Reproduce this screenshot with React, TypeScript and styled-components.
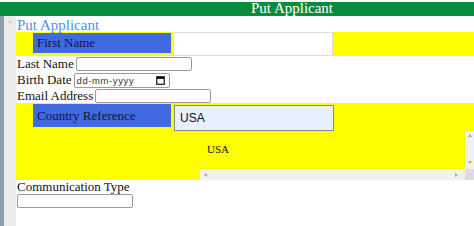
import { createGlobalStyle, styled } from "styled-components";

const GlobalStyle = createGlobalStyle`
  html, body {
    margin: 0;
    padding: 0;
    background: #ffffff;
  }
  body {
    font-family: "Liberation Serif", "Times New Roman", serif;
    color: #111;
  }
`;

const Header = styled.div`
  margin-top: 2px;
  height: 14px;
  line-height: 13px;
  background: #0a8a3c;
  color: #ffffff;
  font-size: 15px;
  text-align: center;
  padding-left: 110px;
`;

const Layout = styled.div`
  display: flex;
  min-height: calc(100vh - 16px);
`;

const Gutter = styled.div`
  width: 12px;
  flex-shrink: 0;
  border-left: 4px solid #8e9baa;
  background: #ececec;
  color: #9a9a9a;
  font-family: "DejaVu Sans", sans-serif;
  font-size: 8px;
  line-height: 8px;
  padding-top: 6px;
  text-align: center;
  box-sizing: content-box;
`;

const Content = styled.div`
  flex: 1;
  min-width: 0;
`;

const SectionTitle = styled.div`
  height: 16px;
  line-height: 18px;
  font-size: 15px;
  color: #4f93e3;
  padding-left: 1px;
`;

const YellowRow = styled.div<{ $height: number }>`
  display: flex;
  align-items: stretch;
  height: ${(p) => p.$height}px;
  background: #ffff00;
  padding-left: 17px;
`;

const BlueLabel = styled.div<{ $top: number; $height: number }>`
  width: 138px;
  height: ${(p) => p.$height}px;
  margin-top: ${(p) => p.$top}px;
  box-sizing: border-box;
  padding-left: 4px;
  background: #4169e1;
  color: #14143c;
  font-size: 13px;
  line-height: ${(p) => p.$height}px;
  flex-shrink: 0;
`;

const WideInput = styled.input<{ $filled?: boolean }>`
  width: 160px;
  box-sizing: border-box;
  margin: ${(p) => (p.$filled ? "2px 0 0 3px" : "0 0 0 2px")};
  border: 1px solid ${(p) => (p.$filled ? "#8a8a8a" : "#dedede")};
  background: ${(p) => (p.$filled ? "#e8f0fe" : "#ffffff")};
  font-family: "Liberation Sans", Arial, sans-serif;
  font-size: 12px;
  padding: 0 5px;
  color: #111;
  outline: none;
`;

const FieldRow = styled.div<{ $height: number }>`
  display: flex;
  align-items: center;
  gap: 2px;
  height: ${(p) => p.$height}px;
  padding-left: 1px;
  font-size: 13px;
`;

const FieldLabel = styled.span`
  white-space: nowrap;
`;

const SmallInput = styled.input`
  width: 116px;
  height: 14px;
  box-sizing: border-box;
  border: 1px solid #9a9a9a;
  border-radius: 2px;
  padding: 0 2px;
  background: #fff;
  outline: none;
`;

const DateBox = styled.div`
  width: 96px;
  height: 15px;
  box-sizing: border-box;
  border: 1px solid #9a9a9a;
  border-radius: 2px;
  display: flex;
  align-items: center;
  justify-content: space-between;
  padding: 0 4px 0 2px;
  font-family: "Liberation Sans", Arial, sans-serif;
  font-size: 9.5px;
  color: #333;
  letter-spacing: 0.6px;
`;

const ScrollRow = styled.div`
  display: flex;
  height: 49px;
`;

const YellowCell = styled.div`
  width: 184px;
  flex-shrink: 0;
  background: #ffff00;
`;

const ScrollFrame = styled.div`
  flex: 1;
  display: grid;
  grid-template-columns: 1fr 9px;
  grid-template-rows: 1fr 11px;
  overflow: hidden;
`;

const ScrollView = styled.div`
  background: #ffff00;
  padding: 12px 0 0 7px;
  font-size: 11px;
  color: #111;
  overflow: hidden;
`;

const ScrollTrack = styled.div<{ $vertical?: boolean }>`
  background: #f1f1f1;
  display: flex;
  flex-direction: ${(p) => (p.$vertical ? "column" : "row")};
  justify-content: space-between;
  align-items: center;
  padding: ${(p) => (p.$vertical ? "3px 0 5px" : "0 7px 0 4px")};
`;

const Arrow = styled.span<{ $dir: "up" | "down" | "left" | "right" }>`
  width: 0;
  height: 0;
  border: 2px solid transparent;
  ${(p) =>
    p.$dir === "up"
      ? "border-bottom: 3px solid #a8a8a8; border-top-width: 0;"
      : p.$dir === "down"
      ? "border-top: 3px solid #a8a8a8; border-bottom-width: 0;"
      : p.$dir === "left"
      ? "border-right: 3px solid #a8a8a8; border-left-width: 0;"
      : "border-left: 3px solid #a8a8a8; border-right-width: 0;"}
`;

const ScrollCorner = styled.div`
  background: #dcdcdc;
`;

const StackField = styled.div`
  padding-left: 1px;
  font-size: 13px;
  line-height: 14px;
`;

const CalendarIcon = () => (
  <svg width="9" height="9" viewBox="0 0 9 9">
    <rect x="0.75" y="0.75" width="7.5" height="7.5" fill="none" stroke="#111" strokeWidth="1.2" />
    <rect x="0.75" y="0.75" width="7.5" height="2.2" fill="#111" />
  </svg>
);

export default function App() {
  return (
    <>
      <GlobalStyle />
      <Header>Put Applicant</Header>
      <Layout>
        <Gutter>˄</Gutter>
        <Content>
          <SectionTitle>Put Applicant</SectionTitle>
          <YellowRow $height={24}>
            <BlueLabel $top={1} $height={20}>First Name</BlueLabel>
            <WideInput />
          </YellowRow>
          <FieldRow $height={16}>
            <FieldLabel>Last Name</FieldLabel>
            <SmallInput />
          </FieldRow>
          <FieldRow $height={16}>
            <FieldLabel>Birth Date</FieldLabel>
            <DateBox>
              <span>dd-mm-yyyy</span>
              <CalendarIcon />
            </DateBox>
          </FieldRow>
          <FieldRow $height={15}>
            <FieldLabel>Email Address</FieldLabel>
            <SmallInput />
          </FieldRow>
          <YellowRow $height={28}>
            <BlueLabel $top={1} $height={23}>Country Reference</BlueLabel>
            <WideInput $filled defaultValue="USA" />
          </YellowRow>
          <ScrollRow>
            <YellowCell />
            <ScrollFrame>
              <ScrollView>USA</ScrollView>
              <ScrollTrack $vertical>
                <Arrow $dir="up" />
                <Arrow $dir="down" />
              </ScrollTrack>
              <ScrollTrack>
                <Arrow $dir="left" />
                <Arrow $dir="right" />
              </ScrollTrack>
              <ScrollCorner />
            </ScrollFrame>
          </ScrollRow>
          <StackField>
            <div>Communication Type</div>
            <SmallInput />
          </StackField>
        </Content>
      </Layout>
    </>
  );
}
